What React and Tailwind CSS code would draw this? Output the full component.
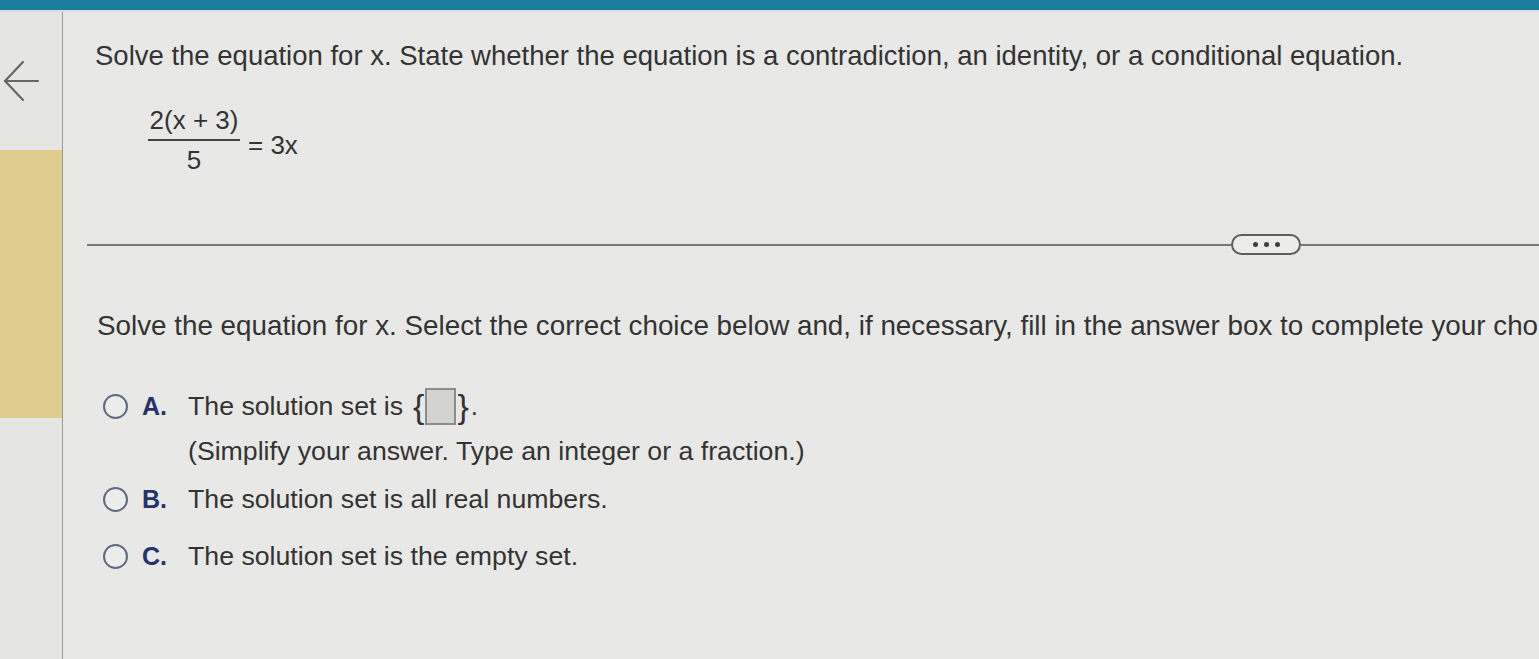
import React from 'react';

function Radio() {
  return <span className="inline-block w-[25px] h-[25px] rounded-full border-[2.5px] border-[#5d6a80] bg-[#ececea] shrink-0" />;
}

function Choice({ letter, children, className = '' }) {
  return (
    <div className={`flex items-start ${className}`}>
      <div className="flex items-center h-[30px]">
        <Radio />
      </div>
      <span className="w-[46px] ml-[14px] font-bold text-[#26336a] leading-[30px] text-[25px]">{letter}.</span>
      <div className="leading-[30px]">{children}</div>
    </div>
  );
}

export default function App() {
  return (
    <div className="w-[1539px] h-[659px] overflow-hidden bg-[#e8e8e6] flex flex-col text-[#333] font-['Liberation_Sans',Arial,sans-serif]">
      <div className="h-[10px] bg-[#1b7ca0] shrink-0" />
      <div className="h-[2px] bg-[#d9dee0] shrink-0" />
      <div className="flex flex-1 min-h-0">
        {/* left rail */}
        <div className="w-[63px] shrink-0 border-r border-[#9a9a98] bg-[#e5e5e3] flex flex-col">
          <div className="h-[138px] flex items-start pt-[46px] pl-[1px]">
            <svg width="40" height="46" viewBox="0 0 40 46" fill="none" stroke="#666" strokeWidth="2.2" strokeLinecap="round" strokeLinejoin="round">
              <path d="M37 23H4" />
              <path d="M22 4L4 23l18 19" />
            </svg>
          </div>
          <div className="h-[268px] bg-[#dfcd8f]" />
        </div>

        {/* main */}
        <div className="flex-1 min-w-0 flex flex-col">
          <div className="pl-[32px] pt-[28px] text-[27.5px] leading-[32px] whitespace-nowrap">
            Solve the equation for x. State whether the equation is a contradiction, an identity, or a conditional equation.
          </div>

          <div className="pl-[85px] mt-[33px] flex items-center text-[26px]">
            <div className="flex flex-col items-center">
              <span className="leading-[30px] px-[1px]">2(x + 3)</span>
              <span className="h-[2px] w-[92px] bg-[#444] mt-[4px]" />
              <span className="leading-[30px] mt-[4px]">5</span>
            </div>
            <span className="ml-[8px] mt-[10px] leading-[30px]">= 3x</span>
          </div>

          <div className="mt-[59px] ml-[24px] flex items-center">
            <div className="flex-1 h-[2px] bg-[#777]" />
            <div className="w-[70px] h-[21px] rounded-full border-2 border-[#5e5e5e] bg-[#ececea] flex items-center justify-center gap-[6px]">
              <span className="w-[5px] h-[5px] rounded-full bg-[#3e3e3e]" />
              <span className="w-[5px] h-[5px] rounded-full bg-[#3e3e3e]" />
              <span className="w-[5px] h-[5px] rounded-full bg-[#3e3e3e]" />
            </div>
            <div className="w-[238px] h-[2px] bg-[#777]" />
          </div>

          <div className="pl-[34px] mt-[54px] text-[27.8px] leading-[34px] whitespace-nowrap">
            Solve the equation for x. Select the correct choice below and, if necessary, fill in the answer box to complete your choice.
          </div>

          <div className="pl-[40px] mt-[48px] text-[26.7px] flex flex-col">
            <Choice letter="A">
              <div className="flex items-center h-[30px]">
                <span>The solution set is</span>
                <span className="ml-[10px] flex items-center text-[34px] leading-[38px]">
                  <span>{'{'}</span>
                  <span className="w-[31px] h-[37px] border-2 border-[#8c8c8c] bg-[#d3d3d1] mx-[1px]" />
                  <span>{'}'}</span>
                  <span className="text-[26px] ml-[2px]">.</span>
                </span>
              </div>
              <div className="mt-[15px]">(Simplify your answer. Type an integer or a fraction.)</div>
            </Choice>
            <Choice letter="B" className="mt-[18px]">
              The solution set is all real numbers.
            </Choice>
            <Choice letter="C" className="mt-[27px]">
              The solution set is the empty set.
            </Choice>
          </div>
        </div>
      </div>
    </div>
  );
}
